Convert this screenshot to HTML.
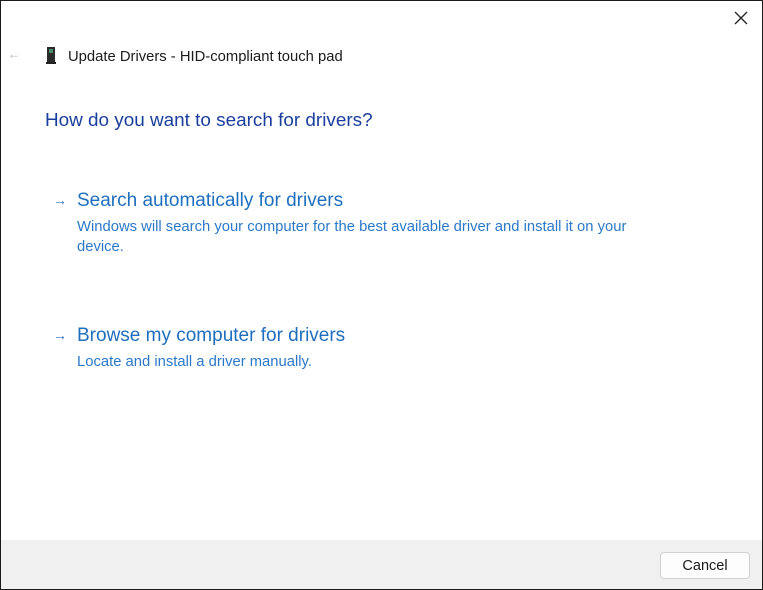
<!DOCTYPE html>
<html><head><meta charset="utf-8"><style>
*{margin:0;padding:0;box-sizing:border-box}
body{width:763px;height:590px;background:#fff;font-family:"Liberation Sans",sans-serif;position:relative;overflow:hidden}
.win{position:absolute;left:0;top:0;width:763px;height:590px;border:1px solid #1a1a1a;background:#fff}
.t{position:absolute;white-space:nowrap}
.foot{position:absolute;left:1px;right:1px;top:540px;bottom:1px;background:#f0f0f0}
.btn{position:absolute;left:660px;top:552px;width:90px;height:27px;background:#fdfdfd;border:1px solid #d0d0d0;border-radius:4px;font-size:14.5px;color:#1a1a1a;text-align:center;line-height:27px}
.h{color:#1a3e9e;font-size:18.9px}
.l{color:#1f6fbf;font-size:19px}
.d{color:#2a79c9;font-size:14.8px;line-height:20px}
</style></head><body>
<div class="win"></div>
<svg class="t" style="left:734px;top:11px" width="14" height="14"><path d="M1 1L13 13M13 1L1 13" stroke="#222" stroke-width="1.3"/></svg>
<div class="t" style="left:8px;top:47px;color:#aaa;font-size:12px">←</div>
<svg class="t" style="left:46px;top:47px" width="11" height="18"><rect x="1" y="0" width="8" height="15" fill="#2b2b2b"/><rect x="3" y="2" width="4" height="4" fill="#4a8a6a"/><rect x="0" y="15" width="10" height="2" fill="#222"/></svg>
<div class="t" style="left:68px;top:49px;font-size:14.8px;color:#1a1a1a">Update Drivers - HID-compliant touch pad</div>
<div class="t h" style="left:45px;top:110px">How do you want to search for drivers?</div>
<div class="t l" style="left:53px;top:192px;font-size:14px">→</div>
<div class="t l" style="left:77px;top:190px">Search automatically for drivers</div>
<div class="t d" style="left:77px;top:217px">Windows will search your computer for the best available driver and install it on your<br>device.</div>
<div class="t l" style="left:53px;top:327px;font-size:14px">→</div>
<div class="t l" style="left:77px;top:325px">Browse my computer for drivers</div>
<div class="t d" style="left:77px;top:352px">Locate and install a driver manually.</div>
<div class="foot"></div>
<div class="btn">Cancel</div>
</body></html>
